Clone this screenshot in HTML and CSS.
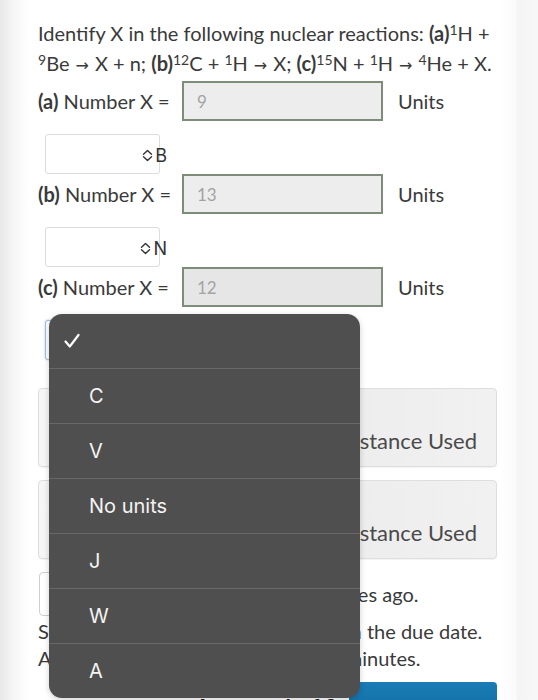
FILE: index.html
```html
<!DOCTYPE html>
<html lang="en">
<head>
<meta charset="utf-8">
<title>Nuclear reactions</title>
<link rel="stylesheet" href="styles.css">
</head>
<body>
<div class="page">
  <div class="content">
    <p class="prompt">Identify X in the following nuclear reactions: <b>(a)</b><sup>1</sup>H + <sup>9</sup>Be<span class="arrow">→</span>X + n; <b>(b)</b><sup>12</sup>C + <sup>1</sup>H<span class="arrow">→</span>X; <b>(c)</b><sup>15</sup>N + <sup>1</sup>H<span class="arrow">→</span><sup>4</sup>He + X.</p>

    <div class="q-row">
      <span class="q-label"><b>(a)</b> Number X =</span>
      <div class="num-input">9</div>
      <span class="units">Units</span>
    </div>
    <div class="unit-select">
      <svg class="sel-arrows" width="11" height="13" viewBox="0 0 11 13"><polyline points="1.5,5.2 5.5,1.4 9.5,5.2" /><polyline points="1.5,7.8 5.5,11.6 9.5,7.8" /></svg>
      <span class="sel-value">B</span>
    </div>

    <div class="q-row">
      <span class="q-label"><b>(b)</b> Number X =</span>
      <div class="num-input">13</div>
      <span class="units">Units</span>
    </div>
    <div class="unit-select">
      <svg class="sel-arrows" width="11" height="13" viewBox="0 0 11 13"><polyline points="1.5,5.2 5.5,1.4 9.5,5.2" /><polyline points="1.5,7.8 5.5,11.6 9.5,7.8" /></svg>
      <span class="sel-value">N</span>
    </div>

    <div class="q-row">
      <span class="q-label"><b>(c)</b> Number X =</span>
      <div class="num-input num-input-active">12</div>
      <span class="units">Units</span>
    </div>
    <div class="unit-select unit-select-focus"></div>

    <div class="card"><span>No Assistance Used</span></div>
    <div class="card card-second"><span>No Assistance Used</span></div>

    <div class="save-row">
      <div class="save-box"></div>
      <span class="save-text">Last saved 2 minutes ago.</span>
    </div>

    <p class="note">Submissions are due by 11:59 PM on the due date.<br>All attempts are autosaved every 5 minutes.</p>

    <div class="submit-row">
      <span class="attempts">Attempt 1 of 3</span>
      <div class="submit-btn">Submit Answer</div>
    </div>
  </div>

  <div class="picker">
    <div class="picker-item picker-check">
      <svg width="16" height="16" viewBox="0 0 16 16"><polyline points="1.5,8.5 5.8,13.5 14.5,2" /></svg>
    </div>
    <div class="picker-item">C</div>
    <div class="picker-item">V</div>
    <div class="picker-item">No units</div>
    <div class="picker-item">J</div>
    <div class="picker-item">W</div>
    <div class="picker-item">A</div>
  </div>
</div>
</body>
</html>
```

FILE: styles.css
```css
html, body {
  margin: 0;
  padding: 0;
}

body {
  background: linear-gradient(to right, #e8e8e8 0, #f6f6f6 14px, #ffffff 30px, #ffffff 498px, #fafafa 516px, #f4f4f4 518px, #f7f7f7 100%);
  font-family: Lato, "Open Sans", sans-serif;
  color: #3a3a3a;
}

.page {
  position: relative;
  height: 700px;
  overflow: hidden;
}

.content {
  padding: 18px 0 0 38px;
  width: 459px;
}

.prompt {
  margin: 0 0 3px;
  font-size: 20px;
  line-height: 30px;
  width: 466px;
}

.prompt sup {
  font-size: 14px;
  line-height: 0;
  vertical-align: 6px;
}

.arrow {
  font-family: "DejaVu Sans", sans-serif;
  font-size: 16px;
  line-height: 0;
  margin: 0 6px;
}

.q-row {
  display: flex;
  align-items: center;
  height: 40px;
  font-size: 20px;
}

.q-label {
  width: 144px;
  flex: none;
}

.num-input {
  box-sizing: border-box;
  width: 201px;
  height: 40px;
  border: 2px solid #7d8d79;
  background: #ededed;
  color: #a3a3a3;
  font-size: 17px;
  padding-left: 13px;
  display: flex;
  align-items: center;
}

.num-input-active {
  background: #e6e6e6;
}

.units {
  margin-left: 15px;
}

.unit-select {
  box-sizing: border-box;
  width: 115px;
  height: 40px;
  margin: 13px 0 0 7px;
  border: 1px solid #dcdcdc;
  border-radius: 3px;
  background: #ffffff;
  display: flex;
  align-items: center;
  justify-content: flex-end;
  padding-top: 2px;
}

.unit-select-focus {
  border-color: #9dbfe0;
  box-shadow: 0 0 2px rgba(80, 140, 200, 0.5);
}

.sel-arrows {
  fill: none;
  stroke: #333333;
  stroke-width: 1.4;
  stroke-linecap: round;
  stroke-linejoin: round;
  margin-right: 2px;
}

.sel-value {
  font-family: Inter, "Liberation Sans", sans-serif;
  font-size: 18px;
  color: #333333;
  margin-right: -8px;
}

.card {
  box-sizing: border-box;
  height: 79px;
  margin-top: 28px;
  border: 1px solid #dedede;
  border-radius: 4px;
  background: linear-gradient(to right, #f6f6f6, #ececec 60%, #f1f1f1);
  box-shadow: 0 1px 1px rgba(0, 0, 0, 0.05);
  display: flex;
  align-items: flex-end;
  justify-content: flex-end;
  padding: 0 19px 12px 0;
  font-size: 22px;
  color: #4a4a4a;
}

.card-second {
  margin-top: 13px;
}

.save-row {
  display: flex;
  align-items: center;
  margin-top: 13px;
  height: 44px;
  font-size: 20px;
}

.save-box {
  box-sizing: border-box;
  width: 110px;
  height: 44px;
  border: 1px solid #cfcfcf;
  border-radius: 4px;
  margin-left: 1px;
}

.save-text {
  margin-left: 45px;
}

.note {
  margin: 2px 0 0;
  font-size: 20px;
  line-height: 27px;
}

.submit-row {
  display: flex;
  align-items: center;
  justify-content: flex-end;
  margin-top: 10px;
  height: 50px;
}

.attempts {
  font-weight: 700;
  font-size: 22px;
  color: #1a1a1a;
  margin-right: 12px;
}

.submit-btn {
  width: 148px;
  height: 50px;
  border-radius: 4px;
  background: linear-gradient(#1a7cb6, #0b6699);
  color: #ffffff;
  display: flex;
  align-items: center;
  justify-content: center;
  font-size: 18px;
}

.picker {
  position: absolute;
  left: 49px;
  top: 314px;
  width: 311px;
  background: #4f4f4f;
  border-radius: 13px;
  overflow: hidden;
  box-shadow: 0 2px 6px rgba(0, 0, 0, 0.18);
}

.picker-item {
  height: 54px;
  border-bottom: 1px solid #686868;
  display: flex;
  align-items: center;
  padding-left: 40px;
  color: #f4f4f4;
  font-family: Inter, "Liberation Sans", sans-serif;
  font-size: 20px;
}

.picker-item:last-child {
  border-bottom: 0;
}

.picker-check {
  padding-left: 15px;
}

.picker-check svg {
  fill: none;
  stroke: #ffffff;
  stroke-width: 2.2;
  stroke-linecap: round;
  stroke-linejoin: round;
}
```
